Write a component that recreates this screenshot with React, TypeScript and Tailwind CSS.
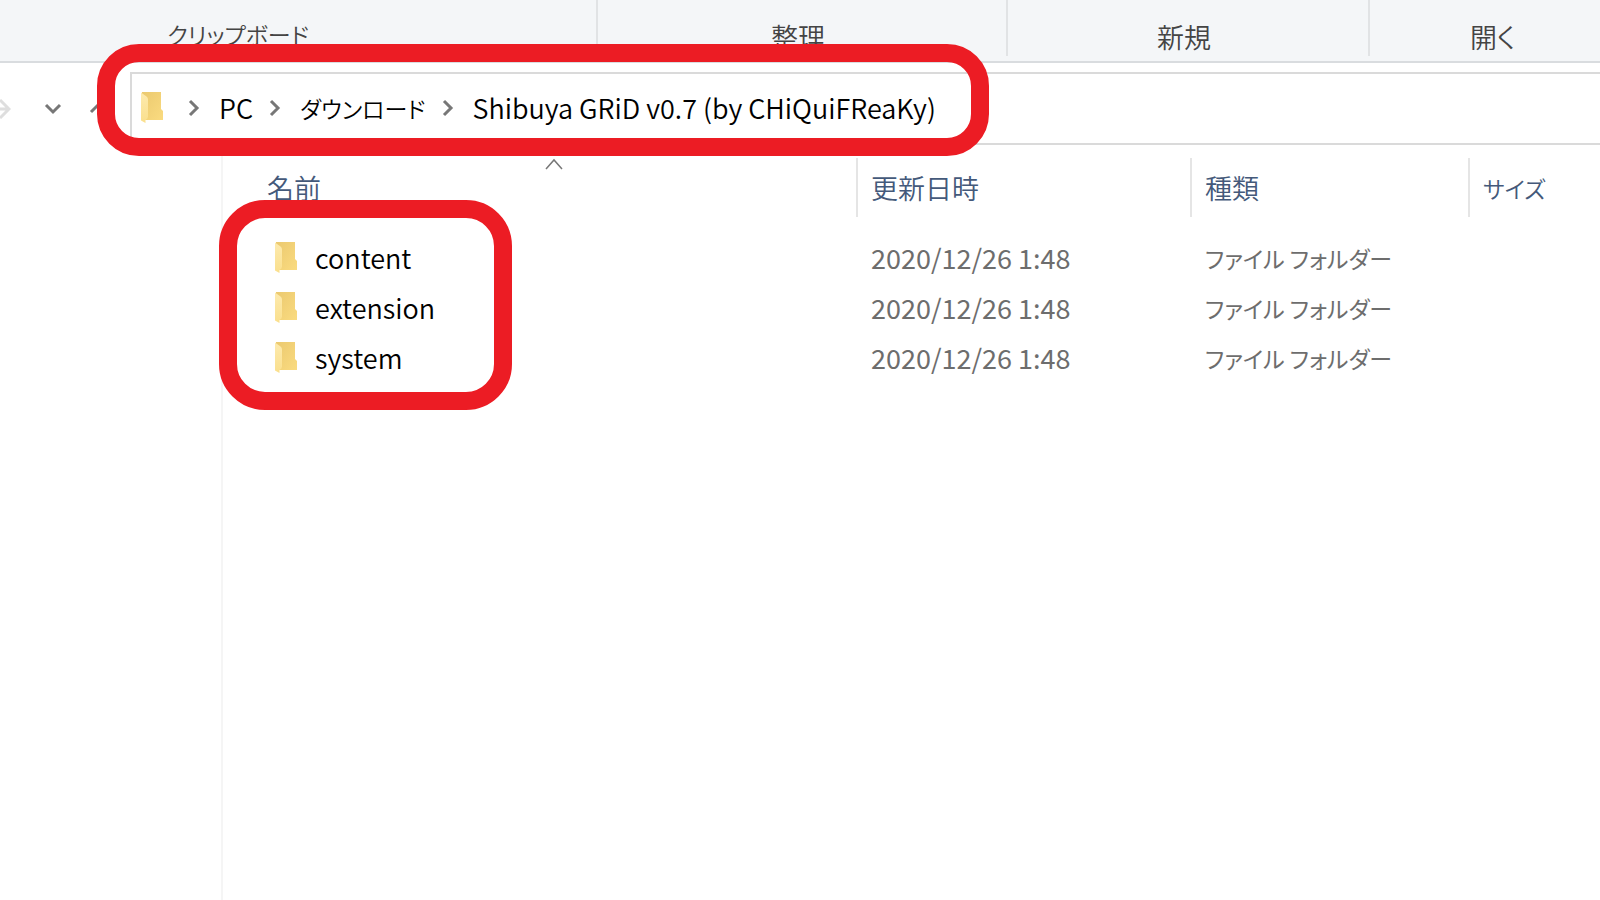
import type { ReactNode } from "react";

const RIBBON_GROUPS = [
  { label: "クリップボード", className: "w-[598px] pr-[120px] pb-1 justify-center border-r-2 text-[23px]" },
  { label: "整理", className: "w-[410px] pr-2 pb-px justify-center border-r-2" },
  { label: "新規", className: "w-[362px] pr-2 pb-px justify-center border-r-2" },
  { label: "開く", className: "flex-1 pl-[100px] pb-px" },
];

const CRUMBS = [
  { label: "PC", className: "" },
  { label: "ダウンロード", className: "text-[23px]" },
  { label: "Shibuya GRiD v0.7 (by CHiQuiFReaKy)", className: "" },
];

const COLUMNS = [
  { label: "更新日時", width: "w-[334px]", size: "" },
  { label: "種類", width: "w-[278px]", size: "" },
  { label: "サイズ", width: "", size: "text-[23px]" },
];

const FILES = [
  { name: "content", date: "2020/12/26 1:48", type: "ファイル フォルダー" },
  { name: "extension", date: "2020/12/26 1:48", type: "ファイル フォルダー" },
  { name: "system", date: "2020/12/26 1:48", type: "ファイル フォルダー" },
];

function FolderIcon() {
  return (
    <svg className="w-6 h-8 shrink-0" viewBox="0 1 24 32" aria-hidden="true">
      <defs>
        <linearGradient id="folder-back" x1="0" y1="0" x2="1" y2="1">
          <stop offset="0" stopColor="#ebc96f" />
          <stop offset="1" stopColor="#fadb80" />
        </linearGradient>
        <linearGradient id="folder-front" x1="0" y1="0" x2="0" y2="1">
          <stop offset="0" stopColor="#fdeaae" />
          <stop offset="1" stopColor="#fadf8c" />
        </linearGradient>
      </defs>
      <path d="M2 1H21V18L23 20V29H5L2 26Z" fill="url(#folder-back)" />
      <path d="M1 1.5L6.5 5.5Q8 6.500 8 8.500V25.500Q8 27.500 5.500 29V32L1 29.500Z" fill="url(#folder-front)" />
    </svg>
  );
}

function Chevron({ d, className }: { d: string; className: string }) {
  return (
    <svg className={`size-[18px] shrink-0 ${className}`} viewBox="0 0 18 18" fill="none" stroke="currentColor" strokeWidth="3" aria-hidden="true">
      <path d={d} />
    </svg>
  );
}

function NavButton({ label, className, children }: { label: string; className: string; children: ReactNode }) {
  return (
    <button type="button" aria-label={label} className={`shrink-0 ${className}`}>
      {children}
    </button>
  );
}

export default function App() {
  return (
    <div className="relative flex min-h-screen flex-col overflow-hidden bg-white font-['Noto_Sans_CJK_JP',sans-serif] text-[27px] leading-9 font-[350] [font-feature-settings:'palt']">
      {/* Ribbon */}
      <div className="flex h-[63px] border-b-2 border-[#d9dcdf] bg-[#f4f6f8] text-[#444]">
        {RIBBON_GROUPS.map((group) => (
          <div key={group.label} className={`flex h-14 items-end border-[#e1e3e5] leading-9 ${group.className}`}>
            {group.label}
          </div>
        ))}
      </div>

      {/* Address row */}
      <nav className="flex h-[82px] pt-[9px]">
        <div className="flex w-[130px] shrink-0 items-center overflow-hidden">
          <NavButton label="進む" className="w-[11px] text-[#dedede]">
            <svg className="h-5 w-[11px]" viewBox="0 0 11 20" fill="none" stroke="currentColor" strokeWidth="3" aria-hidden="true">
              <path d="M0 10H9M0 1L9 10L0 19" />
            </svg>
          </NavButton>
          <NavButton label="最近表示した場所" className="ml-[33px] text-[#777]">
            <Chevron className="" d="M2 5L9 12L16 5" />
          </NavButton>
          <NavButton label="上へ" className="ml-[27px] text-[#777]">
            <Chevron className="" d="M2 12L9 5L16 12" />
          </NavButton>
        </div>
        <ol className="flex flex-1 items-center border-y-2 border-l-2 border-[#dadada] pb-0.5 pl-2 whitespace-nowrap text-black">
          <li className="pr-2">
            <FolderIcon />
          </li>
          {CRUMBS.map((crumb) => (
            <li key={crumb.label} className="flex items-center">
              <Chevron className="ml-[13px] mr-4 text-[#777]" d="M5 2L12 9L5 16" />
              <a href="#" className={crumb.className}>
                {crumb.label}
              </a>
            </li>
          ))}
        </ol>
      </nav>

      {/* Navigation pane and file list */}
      <div className="flex flex-1">
        <aside className="w-[223px] shrink-0 border-r-2 border-[#f5f5f5]" />
        <main className="flex-1 pt-[13px]">
          <table className="w-full table-fixed border-collapse text-left">
            <thead>
              <tr className="text-[#44597a]">
                <th className="w-[633px] p-0 pb-4 font-[350]">
                  <button type="button" className="relative flex h-[59px] w-full items-center pl-11">
                    名前
                    <svg className="absolute left-[321px] top-0 h-3 w-5" viewBox="0 0 20 12" fill="none" stroke="#777" strokeWidth="1.5" aria-hidden="true">
                      <path d="M2 11L10 2L18 11" />
                    </svg>
                  </button>
                </th>
                {COLUMNS.map((column) => (
                  <th key={column.label} className={`p-0 pb-4 font-[350] ${column.width}`}>
                    <button type="button" className={`flex h-[59px] w-full items-center border-l-2 border-[#e5e5e5] pl-[13px] ${column.size}`}>
                      {column.label}
                    </button>
                  </th>
                ))}
              </tr>
            </thead>
            <tbody className="text-[#6d6d6d]">
              {FILES.map((file) => (
                <tr key={file.name} className="h-[50px]">
                  <td className="p-0 pl-[51px] text-black">
                    <span className="flex items-center gap-[17px]">
                      <FolderIcon />
                      {file.name}
                    </span>
                  </td>
                  <td className="p-0 pl-[15px] font-normal">{file.date}</td>
                  <td className="p-0 pl-[15px] text-[23px] font-normal whitespace-nowrap">{file.type}</td>
                  <td />
                </tr>
              ))}
            </tbody>
          </table>
        </main>
      </div>

      {/* Highlights over the path and the folders */}
      <div className="pointer-events-none absolute left-[97px] top-[44px] h-[112px] w-[892px] rounded-[42px] border-[18px] border-[#ec1c24]" />
      <div className="pointer-events-none absolute left-[219px] top-[200px] h-[210px] w-[293px] rounded-[46px] border-[18px] border-[#ec1c24]" />
    </div>
  );
}
